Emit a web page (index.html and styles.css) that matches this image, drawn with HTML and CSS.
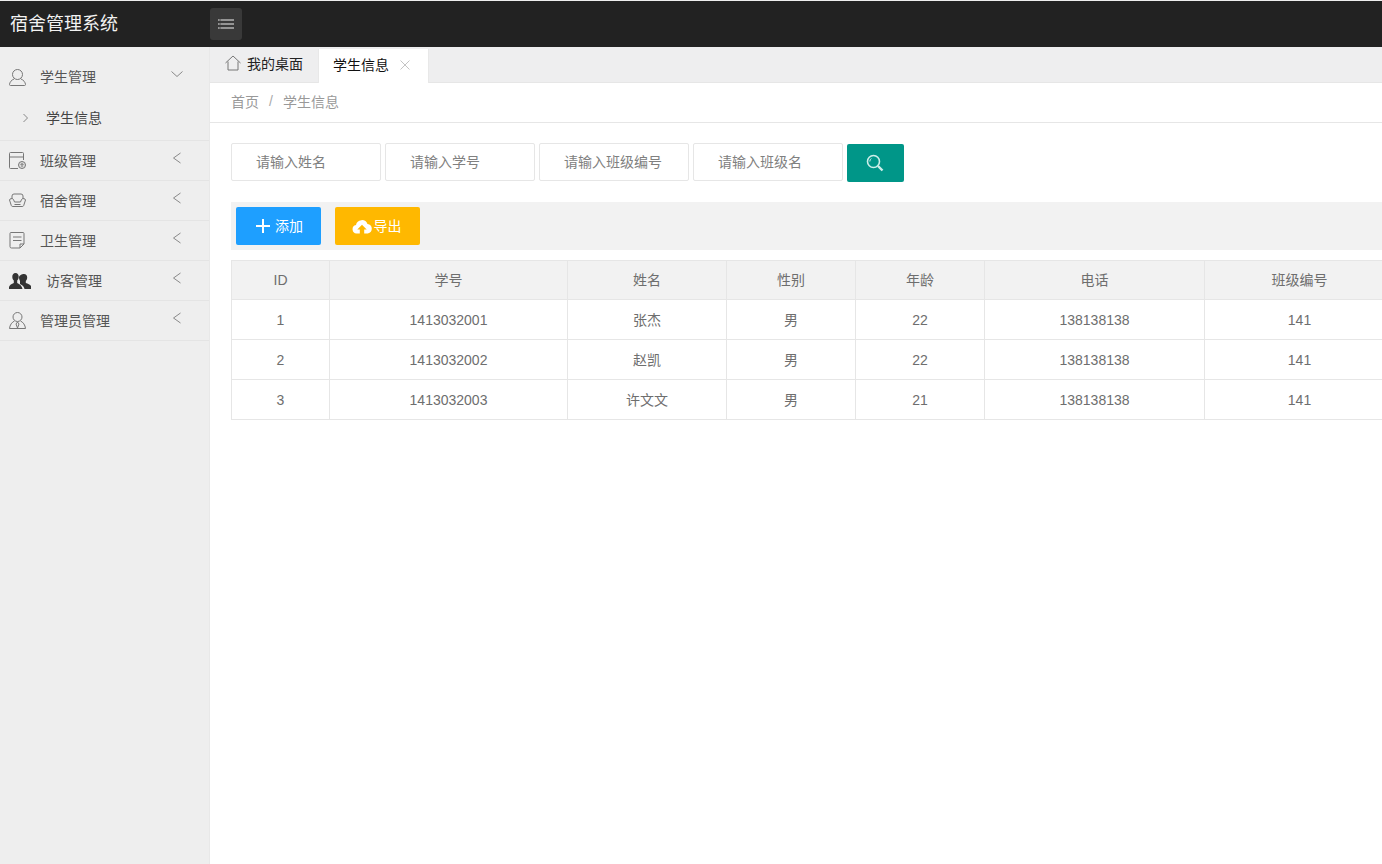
FILE: index.html
```html
<!DOCTYPE html>
<html lang="zh-CN">
<head>
<meta charset="utf-8">
<title>宿舍管理系统</title>
<link rel="stylesheet" href="styles.css">
</head>
<body>
<header class="topbar">
  <div class="brand">宿舍管理系统</div>
  <button class="menu-btn" aria-label="menu">
    <svg width="16" height="12" viewBox="0 0 16 12" fill="none" stroke="#f0f0f0" stroke-width="1"><path d="M0 2h1.700M2.400 2H16M0 6h1.700M2.400 6H16M0 10h1.700M2.400 10H16"/></svg>
  </button>
</header>
<div class="shell">
  <aside class="sidebar">
    <div class="group open">
      <div class="nav first">
        <svg class="ico" viewBox="0 0 17 17" fill="none" stroke="#777"><ellipse cx="8.500" cy="5.500" rx="5" ry="5"/><path d="M5 10C2.500 11 .7 13.200.5 15.500c0 .7.400 1 1 1h14c.6 0 1-.3 1-1-.2-2.300-2-4.500-4.500-5.500"/></svg>
        <span class="lbl">学生管理</span>
        <svg class="chev down" viewBox="0 0 12 12" fill="none" stroke="#888"><path d="M.5 3.500 6 8.500l5.500-5"/></svg>
      </div>
      <div class="sub">
        <svg class="subchev" viewBox="0 0 8 10" fill="none" stroke="#888"><path d="M1.500 1 5.500 5l-4 4"/></svg>
        <span class="sublbl">学生信息</span>
      </div>
    </div>
    <div class="group">
      <div class="nav">
        <svg class="ico" viewBox="0 0 17 17" fill="none" stroke="#777"><path d="M14.500 8V1.500a1 1 0 0 0-1-1h-12a1 1 0 0 0-1 1v14a1 1 0 0 0 1 1H9M.5 5h14"/><circle cx="13" cy="13" r="3.500" fill="#ddd"/><path d="M13 15v-3.500M11.500 13l1.500-1.500 1.500 1.500"/></svg>
        <span class="lbl">班级管理</span>
        <svg class="chev" viewBox="0 0 12 12" fill="none" stroke="#888"><path d="M9.500 1 2.500 6l7 5"/></svg>
      </div>
    </div>
    <div class="group">
      <div class="nav">
        <svg class="ico" viewBox="0 0 17 17" fill="none" stroke="#777"><path d="M3 7V4a2 2 0 0 1 2-2h7a2 2 0 0 1 2 2v3M.5 8c0-1.500 3-2 4-.5l1 2.500h6l1-2.500c1-1.500 4-1 4 .5l-1.800 5.500a1.500 1.500 0 0 1-1.500 1H3.800a1.500 1.500 0 0 1-1.500-1zM5.500 12.500h6"/></svg>
        <span class="lbl">宿舍管理</span>
        <svg class="chev" viewBox="0 0 12 12" fill="none" stroke="#888"><path d="M9.500 1 2.500 6l7 5"/></svg>
      </div>
    </div>
    <div class="group">
      <div class="nav">
        <svg class="ico" viewBox="0 0 17 17" fill="none" stroke="#777"><path d="M11 16H2.500A1.500 1.500 0 0 1 1 14.500V1.500a1 1 0 0 1 1-1h12a1 1 0 0 1 1 1V12zM11 16v-4h4M4 5h8.500M4 8.500h8.500"/></svg>
        <span class="lbl">卫生管理</span>
        <svg class="chev" viewBox="0 0 12 12" fill="none" stroke="#888"><path d="M9.500 1 2.500 6l7 5"/></svg>
      </div>
    </div>
    <div class="group">
      <div class="nav">
        <svg class="ico wide" viewBox="0 0 22 16" fill="#333"><path d="M15 1c2 0 3.200 1.500 3.200 3.500 0 1.400-.6 2.700-1.400 3.400v2c2 .7 4.400 1.500 5.200 3V16h-6.500c-.3-2.200-2-3.800-4.500-5V8C10.600 7.200 10 5.900 10 4.500 10 2.500 13 1 15 1zM6.500 0c2.200 0 3.200 1.800 3.200 3.800 0 1.600-.6 3-1.500 3.800v2.500c2.500 1 4.800 3 5.300 5.900H0v-2c.5-1.800 2.800-3 4.800-3.900V7.600C3.900 6.800 3.300 5.400 3.300 3.800 3.300 1.800 4.300 0 6.500 0z"/></svg>
        <span class="lbl visitor">访客管理</span>
        <svg class="chev" viewBox="0 0 12 12" fill="none" stroke="#888"><path d="M9.500 1 2.500 6l7 5"/></svg>
      </div>
    </div>
    <div class="group">
      <div class="nav">
        <svg class="ico" viewBox="0 0 17 17" fill="none" stroke="#777"><ellipse cx="8.500" cy="5" rx="4.500" ry="4.500"/><path d="M5.500 9C3 10 .8 13 .5 16.500h16C16.200 13 14 10 11.500 9M8.500 10l-1.500 2 1.500 4 1.500-4z"/></svg>
        <span class="lbl">管理员管理</span>
        <svg class="chev" viewBox="0 0 12 12" fill="none" stroke="#888"><path d="M9.500 1 2.500 6l7 5"/></svg>
      </div>
    </div>
  </aside>
  <main class="main">
    <nav class="tabs">
      <div class="tab home">
        <svg class="home-ico" viewBox="0 0 16 16" fill="none" stroke="#777"><path d="M.5 8 8 1l7.500 7M3 6.500v8.500h10V6.500"/></svg>
        <span class="tabtext">我的桌面</span>
      </div>
      <div class="tab active">
        <span class="tabtext">学生信息</span>
        <svg class="close" viewBox="0 0 10 10" fill="none" stroke="#c4c4c4"><path d="m.5.500 9 9M9.500.500l-9 9"/></svg>
      </div>
    </nav>
    <div class="crumbs"><span>首页</span><span class="sep">/</span><span>学生信息</span></div>
    <div class="content">
      <form class="search">
        <input class="field" placeholder="请输入姓名">
        <input class="field" placeholder="请输入学号">
        <input class="field" placeholder="请输入班级编号">
        <input class="field" placeholder="请输入班级名">
        <button type="button" class="btn search-btn" aria-label="search">
          <svg width="18" height="18" viewBox="0 0 18 18" fill="none" stroke="#cdeee9" stroke-width="1.600"><circle cx="7.500" cy="7.500" r="6"/><path d="M3.800 7.500a3.700 3.700 0 0 1 1.500-3" stroke-width="1"/><path d="m12 12 4.500 4.500" stroke-width="2.400"/></svg>
        </button>
      </form>
      <div class="toolbar">
        <button type="button" class="btn add">
          <svg width="14" height="14" viewBox="0 0 14 14" fill="#fff"><path d="M6 0h2v6h6v2H8v6H6V8H0V6h6z"/></svg>
          <span class="btntext">添加</span>
        </button>
        <button type="button" class="btn export">
          <svg width="20" height="15" viewBox="0 0 20 15" fill="#fff"><path d="M4.500 14.500A4.300 4.300 0 0 1 4 6a6 6 0 0 1 11.500-1 4.800 4.800 0 0 1 .3 9.500H12.200v-4h2.500L10 5.700l-4.700 4.800h2.500v4z"/></svg>
          <span class="btntext">导出</span>
        </button>
      </div>
      <table class="grid">
        <colgroup>
          <col class="c1"><col class="c2"><col class="c3"><col class="c4"><col class="c5"><col class="c6"><col class="c7">
        </colgroup>
        <thead>
          <tr><th>ID</th><th class="zh">学号</th><th class="zh">姓名</th><th class="zh">性别</th><th class="zh">年龄</th><th class="zh">电话</th><th class="zh">班级编号</th></tr>
        </thead>
        <tbody>
          <tr><td>1</td><td>1413032001</td><td class="zh">张杰</td><td class="zh">男</td><td>22</td><td>138138138</td><td>141</td></tr>
          <tr><td>2</td><td>1413032002</td><td class="zh">赵凯</td><td class="zh">男</td><td>22</td><td>138138138</td><td>141</td></tr>
          <tr><td>3</td><td>1413032003</td><td class="zh">许文文</td><td class="zh">男</td><td>21</td><td>138138138</td><td>141</td></tr>
        </tbody>
      </table>
    </div>
  </main>
</div>
</body>
</html>
```
FILE: styles.css
```css
* { box-sizing: border-box; }
html, body { margin: 0; height: 100%; overflow: hidden; }
body {
  font-family: "Liberation Sans", "Noto Sans CJK SC", sans-serif;
  font-size: 14px;
  color: #666;
  background: #fff;
}
.topbar {
  height: 47px;
  border-top: 1px solid #eee;
  background: #222;
  display: flex;
  align-items: center;
}
.brand {
  width: 210px;
  padding-left: 10px;
  padding-bottom: 5px;
  font-size: 18px;
  color: #f2f2f2;
  font-family: "Noto Sans CJK SC", sans-serif;
}
.menu-btn {
  width: 32px;
  height: 32px;
  padding: 0;
  border: 0;
  border-radius: 3px;
  background: #393939;
  display: flex;
  align-items: center;
  justify-content: center;
}
.shell { display: flex; height: 817px; }
.sidebar {
  width: 210px;
  flex: none;
  background: #eee;
  border-right: 1px solid #e8e8e8;
}
.group { border-bottom: 1px solid #e4e4e4; }
.nav {
  height: 39px;
  display: flex;
  align-items: center;
  padding-left: 9px;
  color: #555;
  font-size: 14px;
  font-family: "Noto Sans CJK SC", sans-serif;
  position: relative;
}
.nav.first { height: 60px; }
.ico { width: 17px; height: 17px; flex: none; }
.ico.wide { width: 22px; height: 16px; }
.lbl { margin-left: 14px; padding-bottom: 2px; }
.lbl.visitor { margin-left: 15px; }
.chev {
  width: 12px;
  height: 12px;
  position: absolute;
  left: 171px;
  top: 11px;
}
.chev.down { top: 21px; }
.sub {
  height: 33px;
  display: flex;
  align-items: center;
  padding-left: 22px;
  padding-bottom: 11px;
  color: #444;
  font-family: "Noto Sans CJK SC", sans-serif;
}
.sublbl { padding-bottom: 3px; }
.subchev { width: 8px; height: 10px; margin-right: 16px; }
.main { width: 1172px; overflow: hidden; }
.tabs {
  height: 36px;
  background: #eeeeef;
  border-bottom: 1px solid #e6e6e6;
  display: flex;
  align-items: flex-end;
  font-family: "Noto Sans CJK SC", sans-serif;
  font-size: 14px;
  color: #222;
}
.tab { display: flex; align-items: center; }
.tabtext { padding-bottom: 4px; }
.tab.home { height: 35px; width: 108px; padding-left: 15px; }
.home-ico { width: 16px; height: 16px; margin-right: 6px; margin-bottom: 4px; }
.tab.active {
  height: 34px;
  width: 111px;
  padding-left: 14px;
  background: #fff;
  border-left: 1px solid #e8e8e8;
  border-right: 1px solid #e8e8e8;
  margin-bottom: -1px;
  color: #111;
}
.close { width: 10px; height: 10px; margin-left: 11px; margin-bottom: 2px; }
.crumbs {
  height: 40px;
  border-bottom: 1px solid #e6e6e6;
  padding-left: 21px;
  padding-bottom: 3px;
  display: flex;
  align-items: center;
  gap: 10px;
  font-family: "Noto Sans CJK SC", sans-serif;
  font-size: 14px;
  color: #999;
}
.sep { color: #aaa; font-family: "Liberation Sans", sans-serif; }
.content { padding: 20px 0 0 21px; }
.search { display: flex; gap: 4px; height: 39px; align-items: flex-start; }
.field {
  width: 150px;
  height: 38px;
  padding: 0 24px 2px;
  border: 1px solid #e6e6e6;
  border-radius: 2px;
  background: #fff;
  outline: 0;
  font-family: "Noto Sans CJK SC", sans-serif;
  font-size: 14px;
}
.field::placeholder { color: #808080; opacity: 1; }
.btn {
  height: 38px;
  border: 0;
  border-radius: 2px;
  color: #fff;
  font-family: "Noto Sans CJK SC", sans-serif;
  font-size: 14px;
  padding: 0;
  display: flex;
  align-items: center;
  justify-content: center;
}
.btntext { padding-bottom: 2px; }
.search-btn { width: 57px; margin-top: 1px; padding-right: 2px; background: #009688; }
.toolbar {
  width: 1151px;
  height: 48px;
  margin-top: 20px;
  padding: 5px;
  display: flex;
  gap: 14px;
  background: #f2f2f2;
}
.add { width: 85px; padding-left: 2px; background: #1e9fff; gap: 5px; }
.export { width: 85px; padding-right: 2px; background: #ffb800; gap: 2px; }
.grid {
  width: 1163px;
  margin-top: 10px;
  border-collapse: collapse;
  table-layout: fixed;
  font-size: 14px;
}
.c1 { width: 98px; }
.c2 { width: 238px; }
.c3 { width: 159px; }
.c4 { width: 129px; }
.c5 { width: 129px; }
.c6 { width: 220px; }
.c7 { width: 190px; }
.grid th, .grid td {
  height: 40px;
  padding: 0;
  border: 1px solid #e6e6e6;
  text-align: center;
  font-weight: 400;
  color: #6e6e6e;
  font-family: "Liberation Sans", "Noto Sans CJK SC", sans-serif;
}
.grid th { height: 39px; background: #f2f2f2; }
.grid th.zh, .grid td.zh { padding-bottom: 2px; }
```
